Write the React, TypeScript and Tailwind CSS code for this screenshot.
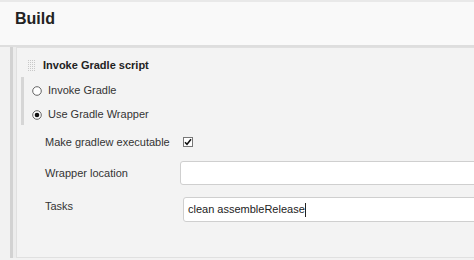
import React from "react";

function Handle() {
  return (
    <svg width="8" height="13" viewBox="0 0 8 13" className="shrink-0">
      {Array.from({ length: 6 }).map((_, r) =>
        Array.from({ length: 4 }).map((_, c) => (
          <rect key={`${r}-${c}`} x={c * 2} y={r * 2 + 1} width="1" height="1" fill="#c8c8c8" />
        ))
      )}
    </svg>
  );
}

function Radio({ checked }: { checked?: boolean }) {
  return (
    <svg width="10" height="10" viewBox="0 0 10 10" className="shrink-0">
      <circle cx="5" cy="5" r="4.3" fill="#fff" stroke="#555" strokeWidth="0.9" />
      {checked && <circle cx="5" cy="5" r="2.3" fill="#111" />}
    </svg>
  );
}

export default function App() {
  return (
    <div
      className="w-[474px] h-[260px] overflow-hidden bg-[#f2f2f2] text-[#333] text-[11px]"
      style={{ fontFamily: '"Liberation Sans", Arial, sans-serif' }}
    >
      <div className="h-[2px] bg-[#e9e9e9]" />
      <div className="h-[45px] bg-[#f9f9f9] border-b-2 border-[#dedede] pl-[15px] pt-[5px]">
        <span className="text-[16px] font-bold text-[#222]">Build</span>
      </div>
      <div className="flex h-[211px]">
        <div className="w-[10px] shrink-0" />
        <div className="w-[3px] shrink-0 bg-[#d2d2d2]" />
        <div className="w-[3px] shrink-0 bg-[#ececec]" />
        <div className="flex-1 border-l border-t border-b border-[#e0e0e0] bg-[#f3f3f3] flex flex-col">
          <div className="flex items-center h-[28px] pl-[11px] pt-[6px]">
            <Handle />
            <span className="ml-[7px] font-bold text-[#222]">Invoke Gradle script</span>
          </div>
          <div className="flex mt-[1px]">
            <div className="ml-[4px] w-[3px] h-[48px] bg-[#d6d6d6] shrink-0" />
            <div className="flex flex-col ml-[8px]">
              <div className="flex items-center h-[25px] pt-[2px]">
                <Radio />
                <span className="ml-[6px]">Invoke Gradle</span>
              </div>
              <div className="flex items-center h-[25px]">
                <Radio checked />
                <span className="ml-[6px]">Use Gradle Wrapper</span>
              </div>
            </div>
          </div>
          <div className="flex items-center h-[20px] mt-[5px] pl-[28px]">
            <span>Make gradlew executable</span>
            <span className="ml-[13px] w-[10px] h-[10px] border border-[#777] bg-white flex items-center justify-center">
              <svg width="8" height="8" viewBox="0 0 8 8">
                <path d="M1 4.2 L3 6.3 L7 1.3" fill="none" stroke="#111" strokeWidth="1.5" />
              </svg>
            </span>
          </div>
          <div className="flex items-center mt-[9px] pl-[28px]">
            <span className="w-[135px]">Wrapper location</span>
            <div className="flex-1 h-[24px] bg-white border border-[#cfcfcf] rounded-[3px] -mr-[4px]" />
          </div>
          <div className="flex items-start mt-[12px] pl-[28px]">
            <span className="w-[138px] pt-[1px]">Tasks</span>
            <div className="flex-1 h-[25px] bg-white border border-[#cfcfcf] rounded-[3px] -mr-[4px] flex items-center pl-[4px]">
              <span className="text-[#222]">clean assembleRelease</span>
              <span className="w-[1px] h-[14px] bg-[#222]" />
            </div>
          </div>
        </div>
      </div>
    </div>
  );
}
